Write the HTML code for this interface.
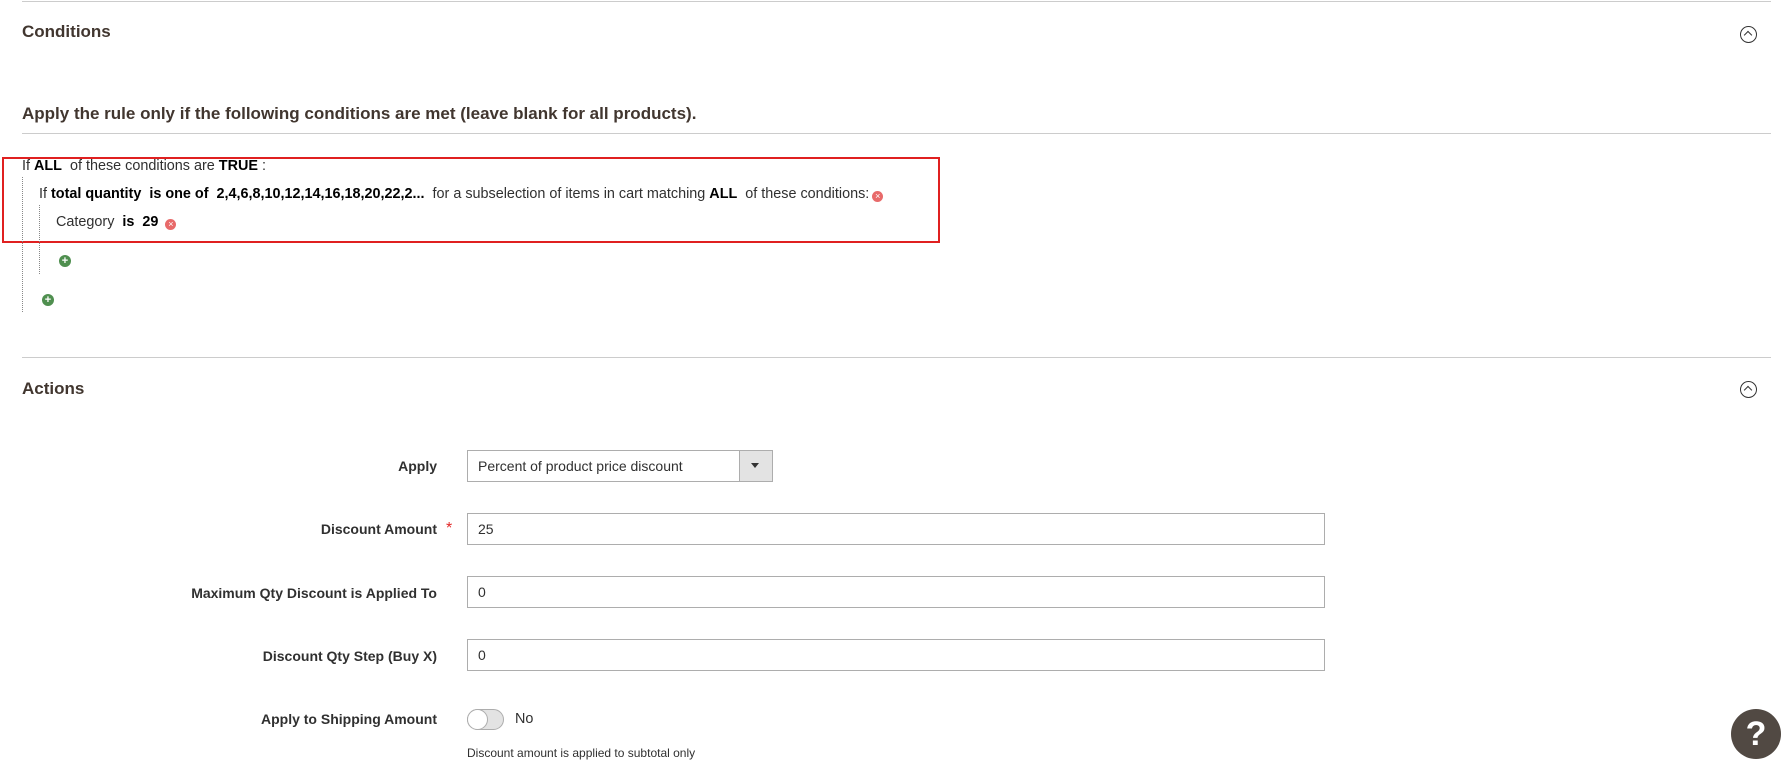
<!DOCTYPE html>
<html><head><style>
body{margin:0;width:1789px;height:770px;background:#fff;font-family:"Liberation Sans",sans-serif;color:#303030;position:relative;overflow:hidden}
.a{position:absolute;white-space:nowrap}
.hr{position:absolute;left:22px;width:1749px;height:1px;background:#ccc}
.t{font-size:17px;font-weight:bold;color:#41362f}
.c{font-size:14.4px;color:#303030}
.c b{color:#000}
.lbl{font-size:14px;font-weight:bold;color:#303030;text-align:right;width:415px;left:22px}
.inp{position:absolute;left:467px;width:858px;height:32px;border:1px solid #adadad;font-size:14px;line-height:31px;padding-left:10px;box-sizing:border-box}
.col{position:absolute;width:17px;height:17px;border:1.5px solid #333;border-radius:50%;box-sizing:border-box}
.col:after{content:"";position:absolute;left:4px;top:5px;width:5px;height:5px;border-left:1.5px solid #333;border-top:1.5px solid #333;transform:rotate(45deg)}
.x{display:inline-block;width:11px;height:11px;border-radius:50%;background:#e86a6a;vertical-align:-1px;margin-left:3px;color:#fff;font-size:9px;line-height:11px;text-align:center}
.p{position:absolute;width:12px;height:12px;border-radius:50%;background:#4f8f4f;color:#fff;font-size:11px;line-height:12px;text-align:center;font-weight:bold}
</style></head><body>
<div class="hr" style="top:1px"></div>
<div class="a t" style="left:22px;top:22px">Conditions</div>
<div class="col" style="left:1740px;top:26px"></div>
<div class="a t" style="left:22px;top:104px">Apply the rule only if the following conditions are met (leave blank for all products).</div>
<div class="hr" style="top:133px"></div>
<div class="a" style="left:2px;top:157px;width:934px;height:82px;border:2px solid #e02020"></div>
<div class="a" style="left:22px;top:177px;height:135px;border-left:1px dotted #888"></div>
<div class="a" style="left:39px;top:205px;height:69px;border-left:1px dotted #888"></div>
<div class="a c" style="left:22px;top:158px">If <b>ALL</b>&nbsp; of these conditions are <b>TRUE</b> :</div>
<div class="a c" style="left:39px;top:186px">If <b>total quantity&nbsp; is one of&nbsp; 2,4,6,8,10,12,14,16,18,20,22,2...</b>&nbsp; for a subselection of items in cart matching <b>ALL</b>&nbsp; of these conditions:<span class="x">×</span></div>
<div class="a c" style="left:56px;top:214px">Category&nbsp; <b>is&nbsp; 29</b> <span class="x">×</span></div>
<div class="p" style="left:59px;top:255px">+</div>
<div class="p" style="left:42px;top:294px">+</div>
<div class="hr" style="top:357px"></div>
<div class="a t" style="left:22px;top:379px">Actions</div>
<div class="col" style="left:1740px;top:381px"></div>
<div class="a lbl" style="top:458px">Apply</div>
<div class="inp" style="top:450px;width:306px;">Percent of product price discount</div>
<div class="a" style="left:739px;top:451px;width:32px;height:30px;background:#e3e3e3;border-left:1px solid #adadad"></div>
<div class="a" style="left:751px;top:463px;border:4px solid transparent;border-top:5px solid #333"></div>
<div class="a lbl" style="top:521px">Discount Amount</div>
<div class="a" style="left:446px;top:520px;color:#e22626;font-size:16px">*</div>
<div class="inp" style="top:513px">25</div>
<div class="a lbl" style="top:585px">Maximum Qty Discount is Applied To</div>
<div class="inp" style="top:576px">0</div>
<div class="a lbl" style="top:648px">Discount Qty Step (Buy X)</div>
<div class="inp" style="top:639px">0</div>
<div class="a lbl" style="top:711px">Apply to Shipping Amount</div>
<div class="a" style="left:467px;top:709px;width:37px;height:21px;border:1px solid #adadad;border-radius:12px;background:#e3e3e3;box-sizing:border-box"></div>
<div class="a" style="left:467px;top:709px;width:21px;height:21px;border:1px solid #adadad;border-radius:50%;background:#fff;box-sizing:border-box"></div>
<div class="a c" style="left:515px;top:711px">No</div>
<div class="a" style="left:467px;top:746px;font-size:12px;color:#303030">Discount amount is applied to subtotal only</div>
<div class="a" style="left:1731px;top:709px;width:50px;height:50px;border-radius:50%;background:#514943;color:#fff;font-size:34px;font-weight:bold;text-align:center;line-height:50px">?</div>
</body></html>
